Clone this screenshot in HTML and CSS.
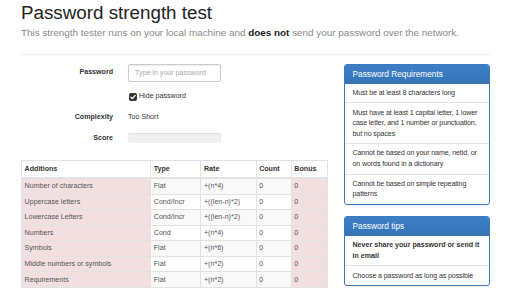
FILE: index.html
```html
<!DOCTYPE html>
<html lang="en">
<head>
<meta charset="UTF-8">
<meta name="viewport" content="width=device-width, initial-scale=1.0">
<title>Password strength test</title>
<link rel="stylesheet" href="styles.css">
</head>
<body>
<div class="container">
<h1>Password strength test</h1>
<p class="lead">This strength tester runs on your local machine and <b>does not</b> send your password over the network.</p>
<hr>

<div class="main">
<div class="left">
<div class="form">
<div class="form-row row-pass">
<label for="pass">Password</label>
<input type="password" id="pass" placeholder="Type in your password">
</div>
<div class="form-row row-check">
<span></span>
<span class="check"><span class="box"><svg viewBox="0 0 10 10" width="8" height="8"><path d="M2.3 5.2 L4.2 7.1 L7.8 3" fill="none" stroke="#fff" stroke-width="1.6" stroke-linecap="round" stroke-linejoin="round"/></svg></span>Hide password</span>
</div>
<div class="form-row row-text">
<label>Complexity</label>
<span>Too Short</span>
</div>
<div class="form-row row-score">
<label>Score</label>
<div class="progress"></div>
</div>
</div>

<table class="scores">
<thead>
<tr><th class="c1">Additions</th><th class="c2">Type</th><th class="c3">Rate</th><th class="c4">Count</th><th class="c5">Bonus</th></tr>
</thead>
<tbody>
<tr><td class="bad">Number of characters</td><td>Flat</td><td>+(n*4)</td><td>0</td><td class="bad">0</td></tr>
<tr><td class="bad">Uppercase letters</td><td>Cond/Incr</td><td>+((len-n)*2)</td><td>0</td><td class="bad">0</td></tr>
<tr><td class="bad">Lowercase Letters</td><td>Cond/Incr</td><td>+((len-n)*2)</td><td>0</td><td class="bad">0</td></tr>
<tr><td class="bad">Numbers</td><td>Cond</td><td>+(n*4)</td><td>0</td><td class="bad">0</td></tr>
<tr><td class="bad">Symbols</td><td>Flat</td><td>+(n*6)</td><td>0</td><td class="bad">0</td></tr>
<tr><td class="bad">Middle numbers or symbols</td><td>Flat</td><td>+(n*2)</td><td>0</td><td class="bad">0</td></tr>
<tr><td class="bad">Requirements</td><td>Flat</td><td>+(n*2)</td><td>0</td><td class="bad">0</td></tr>
</tbody>
</table>
</div>

<div class="right">
<div class="panel">
<div class="panel-heading">Password Requirements</div>
<ul class="list">
<li>Must be at least 8 characters long</li>
<li>Must have at least 1 capital letter, 1 lower case letter, and 1 number or punctuation, but no spaces</li>
<li>Cannot be based on your name, netid, or on words found in a dictionary</li>
<li>Cannot be based on simple repeating patterns</li>
</ul>
</div>
<div class="panel">
<div class="panel-heading">Password tips</div>
<ul class="list">
<li><b>Never share your password or send it in email</b></li>
<li>Choose a password as long as possible</li>
</ul>
</div>
</div>
</div>
</div>
</body>
</html>
```
FILE: styles.css
```css
body {
    margin: 0;
    background: #fff;
    font-family: "Liberation Sans", Arial, sans-serif;
    font-size: 7.1px;
    line-height: 10.4px;
    color: #333;
    overflow: hidden;
}

.container {
    width: 469px;
    padding-left: 21px;
}

h1 {
    margin: 0;
    padding-top: 1.5px;
    font-size: 18.8px;
    line-height: 21px;
    font-weight: normal;
    color: #222;
}

.lead {
    margin: 3px 0 0;
    font-size: 9.9px;
    line-height: 14px;
    color: #888;
    white-space: nowrap;
}

.lead b {
    color: #222;
}

hr {
    margin: 14px 0 0;
    border: none;
    border-top: 1px solid #eee;
}

.main {
    display: grid;
    grid-template-columns: 307px 146px;
    column-gap: 16px;
    margin-top: 9px;
}

/* form */
.form-row {
    display: grid;
    grid-template-columns: 92px 93px;
    column-gap: 15px;
    align-items: center;
}

.form-row label {
    text-align: right;
    font-weight: bold;
}

.row-pass {
    height: 18px;
}

.row-pass input {
    box-sizing: border-box;
    height: 18px;
    width: 93px;
    margin: 0;
    padding: 0 6px;
    border: 1px solid #ccc;
    border-radius: 2px;
    font-family: inherit;
    font-size: 7.1px;
    box-shadow: inset 0 1px 1px rgba(0, 0, 0, 0.075);
}

.row-pass input::placeholder {
    color: #aaa;
}

.row-check {
    margin-top: 9px;
    height: 12px;
}

.check {
    display: flex;
    align-items: center;
    gap: 2px;
}

.box {
    display: inline-flex;
    align-items: center;
    justify-content: center;
    width: 8px;
    height: 8px;
    margin-left: 1px;
    background: #333;
    border-radius: 2px;
}

.row-text {
    margin-top: 9px;
    height: 12px;
}

.row-score {
    margin-top: 9px;
    height: 10px;
}

.progress {
    height: 10px;
    background: #f0f0f0;
    border-radius: 2px;
    box-shadow: inset 0 1px 1px rgba(0, 0, 0, 0.08);
}

/* table */
.scores {
    margin-top: 17px;
    width: 307px;
    border-collapse: collapse;
    border: 1px solid #e2e2e2;
}

.scores th, .scores td {
    padding: 2.1px 2.6px;
    text-align: left;
    border: 1px solid #e2e2e2;
    line-height: 10.4px;
    white-space: nowrap;
}

.scores th {
    padding-top: 3px;
    padding-bottom: 3px;
    border-bottom-width: 2px;
    font-weight: bold;
}

.scores td {
    color: #555;
}

.c1 { width: 123px; }
.c2 { width: 44px; }
.c3 { width: 49px; }
.c4 { width: 29px; }

.scores tbody tr:nth-child(odd) td {
    background: #f9f9f9;
}

.scores tbody tr td.bad {
    background: #f2e0e0;
}

/* panels */
.panel {
    border: 1px solid #3a7bbf;
    border-radius: 3px;
    background: #fff;
    box-shadow: 0 1px 1px rgba(0, 0, 0, 0.05);
    overflow: hidden;
    margin-bottom: 11px;
}

.panel-heading {
    padding: 5px 7.5px;
    background: linear-gradient(#3d80c6, #3473b6);
    color: #fff;
    font-size: 8.3px;
    line-height: 9px;
}

.list {
    margin: 0;
    padding: 0;
    list-style: none;
}

.list li {
    padding: 4.2px 4.5px 4.2px 7.5px;
    border-top: 1px solid #e4e4e4;
    line-height: 10.5px;
    letter-spacing: -0.12px;
}

.list li b {
    letter-spacing: 0;
}

.list li:first-child {
    border-top: none;
}
```
